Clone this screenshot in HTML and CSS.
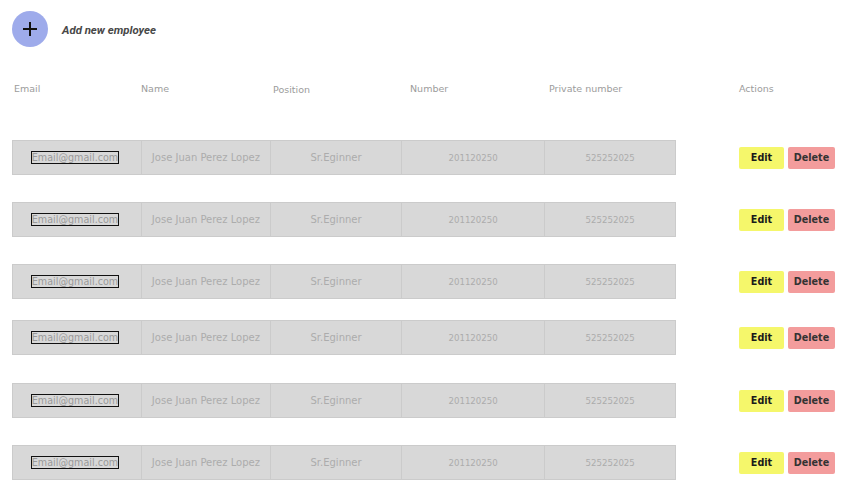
FILE: index.html
```html
<!DOCTYPE html>
<html lang="en">
<head>
    <meta charset="UTF-8">
    <meta name="viewport" content="width=device-width, initial-scale=1.0">
    <title>Employees</title>
    <link rel="stylesheet" href="styles.css">
</head>
<body>
    <div class="top">
        <button class="add-button" aria-label="Add new employee">
            <svg width="14" height="14" viewBox="0 0 14 14">
                <path d="M7 0V14M0 7H14" stroke="#111" stroke-width="2"/>
            </svg>
        </button>
        <span class="add-label">Add new employee</span>
    </div>

    <div class="table-head">
        <div class="head-cell head-email">Email</div>
        <div class="head-cell head-name">Name</div>
        <div class="head-cell head-position">Position</div>
        <div class="head-cell head-number">Number</div>
        <div class="head-cell head-private">Private number</div>
        <div class="head-cell">Actions</div>
    </div>

    <div class="rows">
        <div class="row">
            <div class="cells">
                <div class="cell cell-email"><span class="email-box">Email@gmail.com</span></div>
                <div class="cell cell-name">Jose Juan Perez Lopez</div>
                <div class="cell cell-position">Sr.Eginner</div>
                <div class="cell cell-number">201120250</div>
                <div class="cell cell-private">525252025</div>
            </div>
            <div class="actions">
                <button class="btn btn-edit">Edit</button>
                <button class="btn btn-delete">Delete</button>
            </div>
        </div>
        <div class="row">
            <div class="cells">
                <div class="cell cell-email"><span class="email-box">Email@gmail.com</span></div>
                <div class="cell cell-name">Jose Juan Perez Lopez</div>
                <div class="cell cell-position">Sr.Eginner</div>
                <div class="cell cell-number">201120250</div>
                <div class="cell cell-private">525252025</div>
            </div>
            <div class="actions">
                <button class="btn btn-edit">Edit</button>
                <button class="btn btn-delete">Delete</button>
            </div>
        </div>
        <div class="row">
            <div class="cells">
                <div class="cell cell-email"><span class="email-box">Email@gmail.com</span></div>
                <div class="cell cell-name">Jose Juan Perez Lopez</div>
                <div class="cell cell-position">Sr.Eginner</div>
                <div class="cell cell-number">201120250</div>
                <div class="cell cell-private">525252025</div>
            </div>
            <div class="actions">
                <button class="btn btn-edit">Edit</button>
                <button class="btn btn-delete">Delete</button>
            </div>
        </div>
        <div class="row row-tight">
            <div class="cells">
                <div class="cell cell-email"><span class="email-box">Email@gmail.com</span></div>
                <div class="cell cell-name">Jose Juan Perez Lopez</div>
                <div class="cell cell-position">Sr.Eginner</div>
                <div class="cell cell-number">201120250</div>
                <div class="cell cell-private">525252025</div>
            </div>
            <div class="actions">
                <button class="btn btn-edit">Edit</button>
                <button class="btn btn-delete">Delete</button>
            </div>
        </div>
        <div class="row row-after">
            <div class="cells">
                <div class="cell cell-email"><span class="email-box">Email@gmail.com</span></div>
                <div class="cell cell-name">Jose Juan Perez Lopez</div>
                <div class="cell cell-position">Sr.Eginner</div>
                <div class="cell cell-number">201120250</div>
                <div class="cell cell-private">525252025</div>
            </div>
            <div class="actions">
                <button class="btn btn-edit">Edit</button>
                <button class="btn btn-delete">Delete</button>
            </div>
        </div>
        <div class="row">
            <div class="cells">
                <div class="cell cell-email"><span class="email-box">Email@gmail.com</span></div>
                <div class="cell cell-name">Jose Juan Perez Lopez</div>
                <div class="cell cell-position">Sr.Eginner</div>
                <div class="cell cell-number">201120250</div>
                <div class="cell cell-private">525252025</div>
            </div>
            <div class="actions">
                <button class="btn btn-edit">Edit</button>
                <button class="btn btn-delete">Delete</button>
            </div>
        </div>
    </div>
</body>
</html>
```

FILE: styles.css
```css
:root {
    --row-bg: #d8d8d8;
    --row-border: #cbcbcb;
    --muted: #acacac;
    --head-text: #9c9c9c;
    --add-color: #9eabeb;
    --edit-color: #f5f76b;
    --delete-color: #f39c9c;
}

body, html {
    margin: 0;
    padding: 0;
    background-color: #ffffff;
    font-family: 'DejaVu Sans', sans-serif;
}

.top {
    display: flex;
    align-items: center;
    gap: 14px;
    padding: 11px 12px 0;
}

.add-button {
    width: 36px;
    height: 36px;
    border: none;
    border-radius: 50%;
    background-color: var(--add-color);
    display: flex;
    align-items: center;
    justify-content: center;
    padding: 0;
    cursor: pointer;
}

.add-label {
    font-family: Roboto, sans-serif;
    font-weight: 700;
    font-style: italic;
    font-size: 11.4px;
    color: #484848;
    margin-top: 2px;
}

.table-head {
    display: flex;
    padding: 36px 0 0 14px;
    font-size: 9.5px;
    color: var(--head-text);
    line-height: 12px;
}

.head-email { width: 127px; }
.head-name { width: 132px; }
.head-position { width: 137px; margin-top: 1px; }
.head-number { width: 139px; }
.head-private { width: 190px; }

.rows {
    display: flex;
    flex-direction: column;
    gap: 27px;
    padding: 44px 0 0 12px;
}

.row {
    display: flex;
    align-items: center;
}

.row-tight {
    margin-top: -6px;
}

.row-after {
    margin-top: 1px;
}

.cells {
    display: flex;
    width: 664px;
    height: 35px;
    box-sizing: border-box;
    background-color: var(--row-bg);
    border: 1px solid var(--row-border);
}

.cell {
    display: flex;
    align-items: center;
    justify-content: center;
    font-size: 10px;
    color: var(--muted);
    border-right: 1px solid var(--row-border);
}

.cell-email { width: 128px; }
.cell-name { width: 129px; }
.cell-position { width: 130px; }
.cell-number { width: 143px; font-size: 8.6px; }
.cell-private { width: 130px; font-size: 8.6px; border-right: none; }

.email-box {
    display: block;
    width: 88px;
    height: 13px;
    box-sizing: border-box;
    border: 1px solid #111;
    font-size: 9.6px;
    line-height: 11px;
    color: #9a9a9a;
    white-space: nowrap;
    overflow: hidden;
    padding-left: 0;
    margin-left: -4px;
}

.actions {
    display: flex;
    gap: 4px;
    margin-left: 63px;
}

.btn {
    height: 22px;
    border: none;
    border-radius: 2px;
    font-family: inherit;
    font-weight: 700;
    font-size: 9.6px;
    color: #1a1a1a;
    padding: 0;
    cursor: pointer;
}

.btn-edit {
    width: 45px;
    background-color: var(--edit-color);
}

.btn-delete {
    width: 47px;
    background-color: var(--delete-color);
    color: #333333;
}
```
